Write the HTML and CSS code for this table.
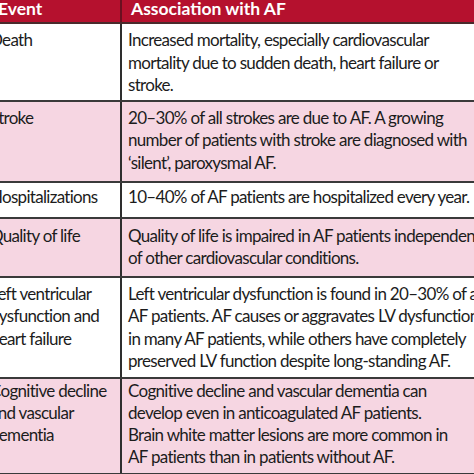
FILE: index.html
```html
<!DOCTYPE html>
<html>
<head>
<meta charset="utf-8">
<link rel="stylesheet" href="styles.css">
</head>
<body>
<table class="af-table">
  <colgroup>
    <col class="col-event-w">
    <col class="col-assoc-w">
  </colgroup>
  <thead>
    <tr><th>Event</th><th>Association with AF</th></tr>
  </thead>
  <tbody>
    <tr class="row-death">
      <td>Death</td>
      <td>Increased mortality, especially cardiovascular<br>mortality due to sudden death, heart failure or<br>stroke.</td>
    </tr>
    <tr class="pink row-stroke">
      <td>Stroke</td>
      <td>20–30% of all strokes are due to AF. A growing<br>number of patients with stroke are diagnosed with<br>‘silent’, paroxysmal AF.</td>
    </tr>
    <tr class="row-hosp">
      <td>Hospitalizations</td>
      <td>10–40% of AF patients are hospitalized every year.</td>
    </tr>
    <tr class="pink row-qol">
      <td>Quality of life</td>
      <td>Quality of life is impaired in AF patients independent<br>of other cardiovascular conditions.</td>
    </tr>
    <tr class="row-lv">
      <td>Left ventricular<br>dysfunction and<br>heart failure</td>
      <td>Left ventricular dysfunction is found in 20–30% of all<br>AF patients. AF causes or aggravates LV dysfunction<br>in many AF patients, while others have completely<br>preserved LV function despite long-standing AF.</td>
    </tr>
    <tr class="pink row-cog">
      <td>Cognitive decline<br>and vascular<br>dementia</td>
      <td>Cognitive decline and vascular dementia can<br>develop even in anticoagulated AF patients.<br>Brain white matter lesions are more common in<br>AF patients than in patients without AF.</td>
    </tr>
  </tbody>
</table>
</body>
</html>
```
FILE: styles.css
```css
html, body {
  margin: 0;
  padding: 0;
  background: #ffffff;
  overflow: hidden;
}

.af-table {
  table-layout: fixed;
  width: 560px;
  border-collapse: collapse;
  margin: -4px 0 0 -17px;
  font-family: Lato, "Open Sans", sans-serif;
  font-size: 17px;
  line-height: 22.5px;
  color: #1c1c1c;
}

.col-event-w { width: 138px; }
.col-assoc-w { width: 422px; }

.af-table th,
.af-table td {
  text-align: left;
  vertical-align: top;
  white-space: nowrap;
  overflow: hidden;
}

.af-table th {
  background: #b5112e;
  color: #ffffff;
  font-weight: 700;
  font-size: 17.5px;
  line-height: 22px;
  padding: 2px 7px 2px 15px;
  border-bottom: 2px solid #4a2a2c;
}

.af-table th + th {
  padding-left: 9px;
  border-left: 2px solid #6a1020;
}

.af-table td {
  padding: 5px 5px 5px 7px;
  letter-spacing: -0.7px;
  border-bottom: 2px solid #3a3a3a;
}

.af-table td + td {
  padding-left: 6px;
  border-left: 2px solid #2e2e2e;
}

.pink td {
  background: #f6d6e2;
}

.row-death td { padding-top: 5px; padding-bottom: 3px; }
.row-stroke td { padding-top: 5px; padding-bottom: 7px; }
.row-hosp td { padding-top: 3px; padding-bottom: 8px; }
.row-qol td { padding-top: 6px; padding-bottom: 6px; }
.row-lv td { padding-top: 5px; padding-bottom: 4px; }
.row-cog td { padding-top: 1px; line-height: 22px; }
```
